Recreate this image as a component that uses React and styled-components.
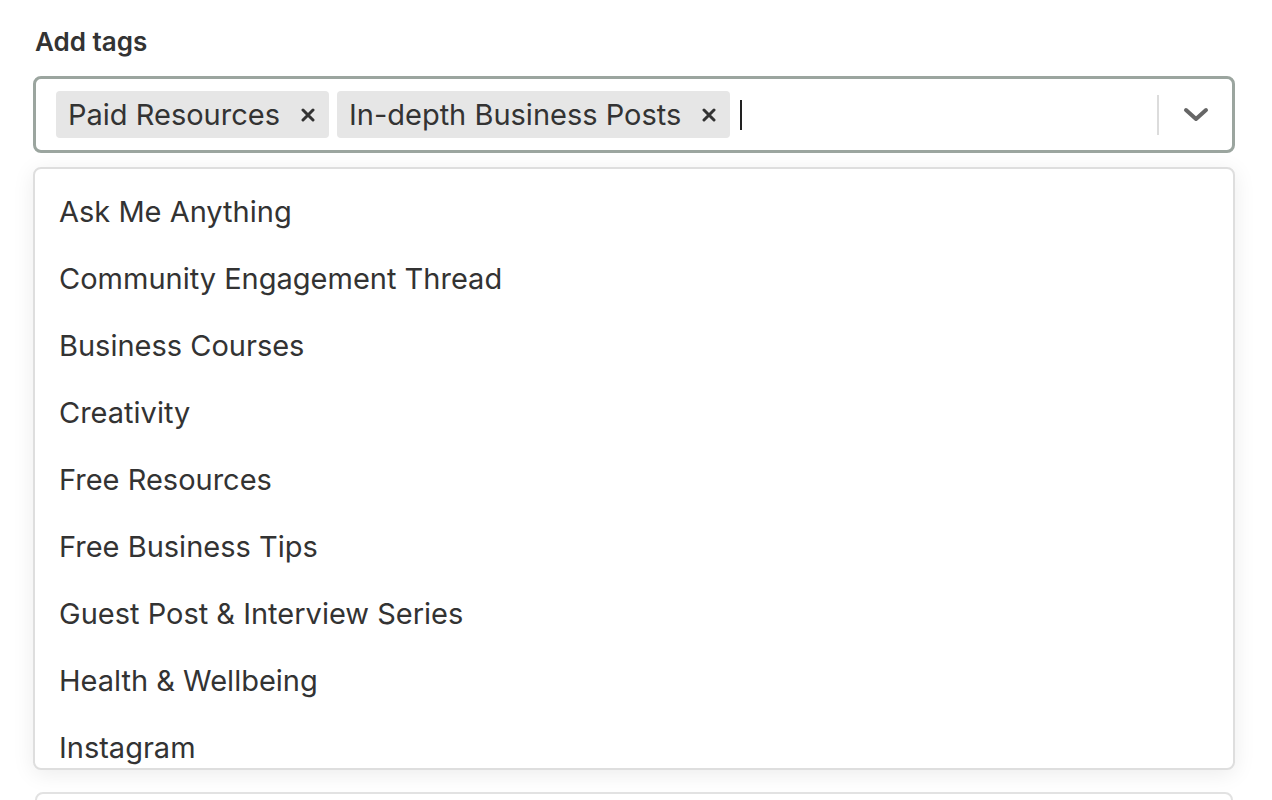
import React from "react";
import styled, { createGlobalStyle } from "styled-components";

const GlobalStyle = createGlobalStyle`
  html, body {
    margin: 0;
    padding: 0;
    background: #ffffff;
    overflow: hidden;
  }
  body {
    font-family: Inter, "Noto Sans", "Liberation Sans", sans-serif;
    color: #333333;
  }
`;

const Page = styled.div`
  width: 1272px;
  height: 800px;
  padding: 26px 37px 0 33px;
  box-sizing: border-box;
  display: flex;
  flex-direction: column;
  overflow: hidden;
  & > * {
    flex-shrink: 0;
  }
`;

const Label = styled.label`
  font-size: 26px;
  font-weight: 600;
  color: #333333;
  margin-left: 2px;
  line-height: 32px;
  margin-bottom: 18px;
`;

const Control = styled.div`
  position: relative;
  height: 77px;
  box-sizing: border-box;
  border: 3px solid #9ba59f;
  border-radius: 8px;
  display: flex;
  align-items: center;
  padding: 0 0 0 20px;
  background: #fff;
`;

const ValueArea = styled.div`
  flex: 1;
  display: flex;
  align-items: center;
  gap: 8px;
`;

const Chip = styled.div`
  display: flex;
  align-items: center;
  height: 47px;
  background: #e6e6e6;
  border-radius: 4px;
  padding: 0 14px 0 12px;
  font-size: 29px;
  color: #333333;
`;

const ChipRemove = styled.span`
  display: inline-flex;
  margin-left: 21px;
  color: #333;
`;

const Cursor = styled.span`
  width: 2px;
  height: 30px;
  background: #222;
  margin-left: 2px;
`;

const Indicators = styled.div`
  display: flex;
  align-items: center;
  height: 100%;
`;

const Separator = styled.span`
  width: 2px;
  height: 40px;
  background: #dcdcdc;
`;

const Chevron = styled.span`
  display: flex;
  width: 73px;
  justify-content: center;
  color: #666666;
`;

const Menu = styled.div`
  position: relative;
  z-index: 2;
  margin-top: 14px;
  height: 603px;
  box-sizing: border-box;
  border: 2px solid #dedede;
  border-radius: 8px;
  background: #fff;
  box-shadow: 0 4px 22px rgba(0, 0, 0, 0.08);
  overflow: hidden;
  padding-top: 9px;
`;

const Option = styled.div`
  height: 67px;
  display: flex;
  align-items: center;
  padding-left: 24px;
  font-size: 29px;
  color: #333333;
`;

const NextField = styled.div`
  margin: 22px 2px 0;
  height: 80px;
  border: 2px solid #e2e2e2;
  border-radius: 8px;
`;

const XIcon = () => (
  <svg width="14" height="14" viewBox="0 0 14 14">
    <path d="M2 2 L12 12 M12 2 L2 12" stroke="currentColor" strokeWidth="3" strokeLinecap="round" />
  </svg>
);

const ChevronIcon = () => (
  <svg width="26" height="16" viewBox="0 0 26 16">
    <path d="M3 3 L13 12 L23 3" fill="none" stroke="currentColor" strokeWidth="4" strokeLinecap="round" strokeLinejoin="round" />
  </svg>
);

const selected = ["Paid Resources", "In-depth Business Posts"];
const options = [
  "Ask Me Anything",
  "Community Engagement Thread",
  "Business Courses",
  "Creativity",
  "Free Resources",
  "Free Business Tips",
  "Guest Post & Interview Series",
  "Health & Wellbeing",
  "Instagram",
];

export default function App() {
  return (
    <>
      <GlobalStyle />
      <Page>
        <Label>Add tags</Label>
        <Control>
          <ValueArea>
            {selected.map((t) => (
              <Chip key={t}>
                {t}
                <ChipRemove>
                  <XIcon />
                </ChipRemove>
              </Chip>
            ))}
            <Cursor />
          </ValueArea>
          <Indicators>
            <Separator />
            <Chevron>
              <ChevronIcon />
            </Chevron>
          </Indicators>
        </Control>
        <Menu>
          {options.map((o) => (
            <Option key={o}>{o}</Option>
          ))}
        </Menu>
        <NextField />
      </Page>
    </>
  );
}
